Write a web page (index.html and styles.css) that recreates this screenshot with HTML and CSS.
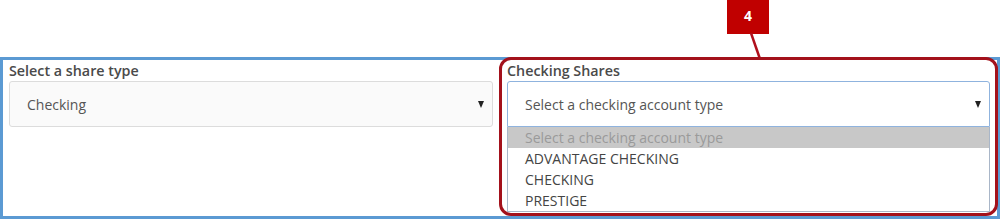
FILE: index.html
```html
<!DOCTYPE html>
<html lang="en">

<head>
    <meta charset="UTF-8">
    <title>Share type</title>
    <link rel="stylesheet" href="styles.css">
</head>

<body>
    <div class="page">
        <div class="panel">
            <section class="field">
                <label>Select a share type</label>
                <div class="select">
                    <span>Checking</span>
                    <i class="caret"></i>
                </div>
            </section>
            <section class="field">
                <label>Checking Shares</label>
                <div class="select open">
                    <span>Select a checking account type</span>
                    <i class="caret"></i>
                </div>
                <ul class="options">
                    <li class="placeholder">Select a checking account type</li>
                    <li>ADVANTAGE CHECKING</li>
                    <li>CHECKING</li>
                    <li>PRESTIGE</li>
                </ul>
            </section>
        </div>

        <!-- callout -->
        <div class="badge">4</div>
        <svg class="pointer" width="40" height="30" viewBox="0 0 40 30">
            <line x1="11" y1="0" x2="20" y2="26" stroke="#b0101c" stroke-width="2.5" />
        </svg>
        <div class="highlight"></div>
    </div>
</body>

</html>
```

FILE: styles.css
```css
* {
    box-sizing: border-box;
    margin: 0;
    padding: 0;
}

body {
    background: #fff;
    font-family: "Open Sans", "Liberation Sans", sans-serif;
    font-size: 14px;
    color: #444;
}

.page {
    position: relative;
    width: 1000px;
    height: 221px;
    padding-top: 57px;
}

.panel {
    display: grid;
    grid-template-columns: 484px 483px;
    column-gap: 14px;
    height: 162px;
    padding: 1px 8px 0 6px;
    border: 3px solid #5b9ad3;
    width: 1000px;
}

.field label {
    display: block;
    height: 20px;
    line-height: 20px;
    font-size: 14.3px;
    font-weight: 600;
    color: #4a4a4a;
}

.select {
    position: relative;
    display: flex;
    align-items: center;
    height: 46px;
    padding-left: 17px;
    border: 1px solid #dcdcdc;
    border-radius: 3px;
    background: #fafafa;
    color: #555;
}

.select.open {
    background: #fff;
    border-color: #8fb3de;
    border-radius: 3px 3px 0 0;
}

.caret {
    position: absolute;
    right: 8px;
    top: 19px;
    border-left: 3.5px solid transparent;
    border-right: 3.5px solid transparent;
    border-top: 7px solid #222;
}

.options {
    list-style: none;
    border: 1px solid #a9b6c8;
    border-top: none;
    background: #fff;
}

.options li {
    height: 21px;
    line-height: 21px;
    padding-left: 17px;
    color: #444;
}

.options .placeholder {
    background: #c8c8c8;
    color: #9a9a9a;
}

.badge {
    position: absolute;
    left: 727px;
    top: 0;
    width: 42px;
    height: 34px;
    background: #c00000;
    color: #fff;
    font-weight: 700;
    font-size: 14px;
    text-align: center;
    line-height: 32px;
}

.pointer {
    position: absolute;
    left: 740px;
    top: 33px;
}

.highlight {
    position: absolute;
    left: 499px;
    top: 57px;
    width: 499px;
    height: 159px;
    border: 3px solid #a3111b;
    border-radius: 12px;
    pointer-events: none;
}
```
